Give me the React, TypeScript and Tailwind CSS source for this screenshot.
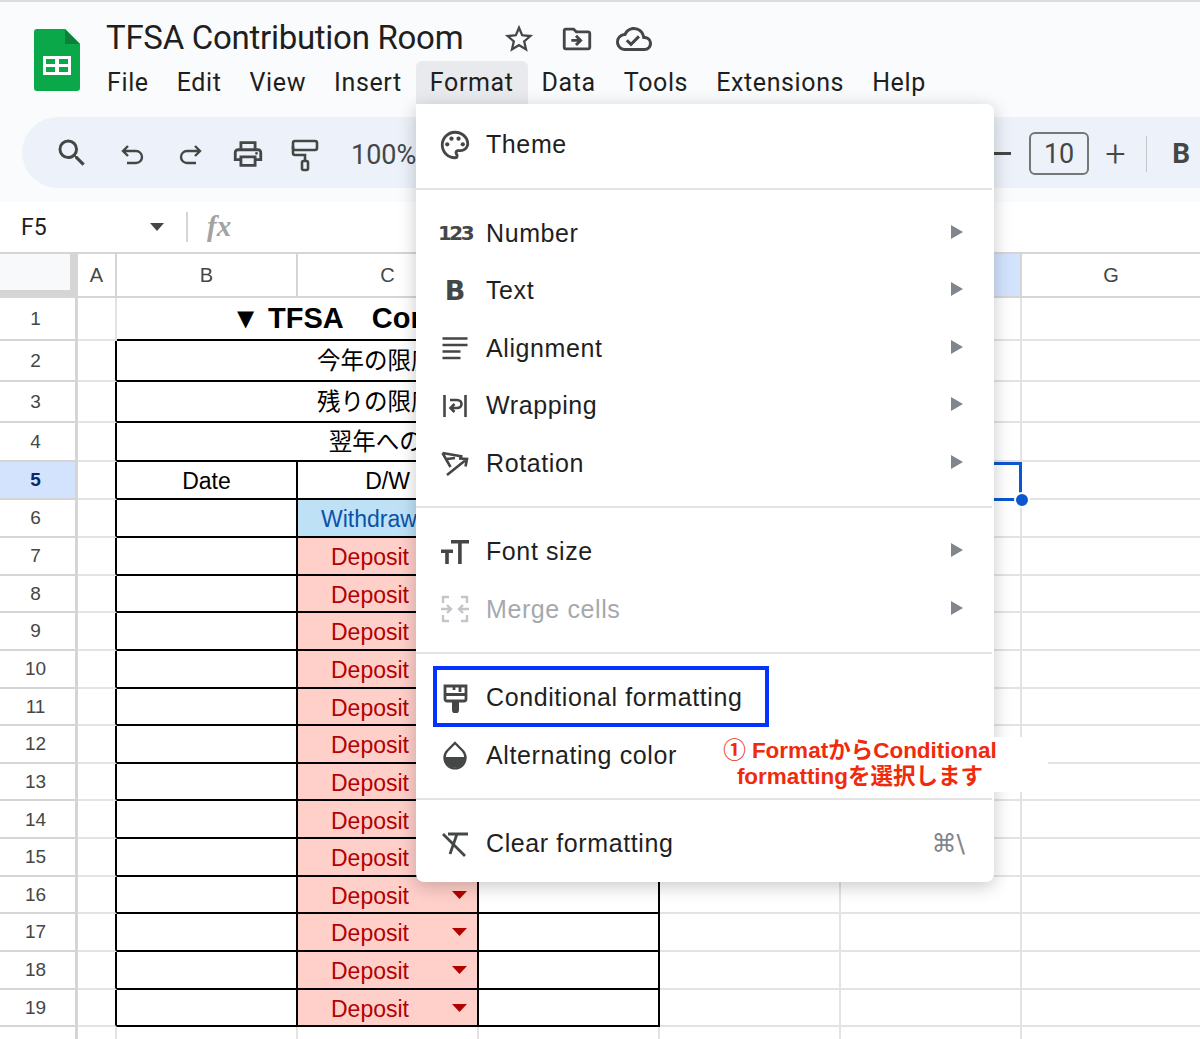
import React from "react";
import {
  MdSearch, MdOutlinePrint, MdStarBorder,
  MdOutlineDriveFileMove, MdOutlineCloudDone, MdOutlinePalette,
} from "react-icons/md";

const MENUBAR = ["File", "Edit", "View", "Insert", "Format", "Data", "Tools", "Extensions", "Help"];
const COLS = ["A", "B", "C", "D", "E", "F", "G"];
const ROWS = Array.from({ length: 20 }, (_, i) => i + 1);

const UndoIcon = () => (
  <svg width="26" height="26" viewBox="0 0 26 26" fill="none" stroke="#444746" strokeWidth="2.400">
    <path d="M8 4L3 9l5 5M3 9h13a6 6 0 0 1 0 12H7" />
  </svg>
);
const RedoIcon = () => (
  <svg width="26" height="26" viewBox="0 0 26 26" fill="none" stroke="#444746" strokeWidth="2.400">
    <path d="M18 4l5 5-5 5M23 9H10a6 6 0 0 0 0 12h9" />
  </svg>
);
const RollerIcon = () => (
  <svg width="34" height="34" viewBox="0 0 34 34" fill="none" stroke="#444746" strokeWidth="2.600">
    <rect x="5" y="3" width="24" height="9" rx="2" />
    <path d="M5 8v7a2 2 0 0 0 2 2h10v6" />
    <rect x="14" y="23" width="6" height="9" rx="1.500" />
  </svg>
);
const AlignIcon = () => (
  <svg width="30" height="30" viewBox="0 0 30 30" fill="none" stroke="#444746" strokeWidth="2.400">
    <path d="M2.500 5.500h25M2.500 12h25M2.500 18.500h18M2.500 25h18" />
  </svg>
);
const WrapIcon = () => (
  <svg width="30" height="30" viewBox="0 0 30 30" fill="none" stroke="#444746" strokeWidth="2.600">
    <path d="M4.500 4v22M25.500 4v22M10 9h7c3 0 4.500 2 4.500 4s-1.500 4-4.500 4h-6M14.500 13l-4 4 4 4" />
  </svg>
);
const RotateIcon = () => (
  <svg width="30" height="30" viewBox="0 0 30 30" fill="none" stroke="#444746" strokeWidth="2.600">
    <path d="M2.500 5l20 3.500M2.500 5l8 14M7 11l8-1M7 27L27 11M19 10.500l8 .5-1.500 7.500" />
  </svg>
);
const FontSizeIcon = () => (
  <svg width="30" height="30" viewBox="0 0 30 30" fill="#444746">
    <path d="M11 3h18v3.500h-7.300V27h-3.600V6.500H11zM1 12.500h12V16H8.800v11H5.200V16H1z" />
  </svg>
);
const MergeIcon = () => (
  <svg width="30" height="30" viewBox="0 0 30 30" fill="none" stroke="#c2c5c9" strokeWidth="2.400">
    <path d="M3 9V3h6M27 9V3h-6M3 21v6h6M27 21v6h-6M1 15h10M7 11l4 4-4 4M29 15H19M23 11l-4 4 4 4" />
  </svg>
);
const BrushIcon = () => (
  <svg width="30" height="30" viewBox="0 0 30 30" fill="none" stroke="#444746" strokeWidth="2.800">
    <path d="M5 3h21v13a2 2 0 0 1-2 2H7a2 2 0 0 1-2-2zM5 11.500h21M14 3v4M20 3v6" />
    <path d="M12 18h7v9a3.500 3.500 0 0 1-7 0z" fill="#444746" stroke="none" />
  </svg>
);
const DropIcon = () => (
  <svg width="30" height="30" viewBox="0 0 30 30" fill="none" stroke="#444746" strokeWidth="2.400">
    <path d="M15 3l7.500 7.500a10.500 10.500 0 1 1-15 0z" />
    <path d="M4.500 17h21a10.500 10.500 0 0 1-21 0z" fill="#444746" stroke="none" />
  </svg>
);
const ClearIcon = () => (
  <svg width="30" height="30" viewBox="0 0 30 30" fill="none" stroke="#444746" strokeWidth="2.800">
    <path d="M8 5h20M17 5l-7 20M3 5l22 22" />
  </svg>
);
const SheetsLogo = () => (
  <svg width="46" height="62" viewBox="0 0 46 62">
    <path d="M3 0h28l15 15v44a3 3 0 0 1-3 3H3a3 3 0 0 1-3-3V3a3 3 0 0 1 3-3z" fill="#0ba84a" />
    <path d="M31 0l15 15H31z" fill="#0a8038" />
    <path d="M9 27h28v19H9zM12 30v5h9v-5zM25 30v5h9v-5zM12 38v5h9v-5zM25 38v5h9v-5z" fill="#fff" fillRule="evenodd" />
  </svg>
);

const MENU_GROUPS = [
  [{ label: "Theme", icon: <MdOutlinePalette size={34} color="#444746" /> }],
  [
    { label: "Number", sub: true, icon: <span className="font-['DejaVu_Sans'] font-bold text-[20px] tracking-[-2.500px] text-[#444746]">123</span> },
    { label: "Text", sub: true, icon: <span className="font-['DejaVu_Sans'] font-bold text-[27px] text-[#444746]">B</span> },
    { label: "Alignment", sub: true, icon: <AlignIcon /> },
    { label: "Wrapping", sub: true, icon: <WrapIcon /> },
    { label: "Rotation", sub: true, icon: <RotateIcon /> },
  ],
  [
    { label: "Font size", sub: true, icon: <FontSizeIcon /> },
    { label: "Merge cells", sub: true, disabled: true, icon: <MergeIcon /> },
  ],
  [
    { label: "Conditional formatting", icon: <BrushIcon /> },
    { label: "Alternating color", icon: <DropIcon /> },
  ],
  [{ label: "Clear formatting", shortcut: true, icon: <ClearIcon /> }],
];

function FormatMenu() {
  return (
    <div className="absolute left-[416px] top-[104px] z-20 w-[578px] h-[778px] bg-white rounded-b-lg rounded-tr-lg shadow-[0_4px_18px_rgba(0,0,0,0.22)] py-3">
      {MENU_GROUPS.map((group, i) => (
        <div key={i} className={i > 0 ? "border-t-2 border-[#e3e3e3] mt-[14px] pt-[15px] mr-[2px]" : "mr-[2px]"}>
          {group.map((item) => (
            <div key={item.label} className="h-[57.500px] flex items-center">
              <div className="w-[70px] pl-[8px] flex justify-center items-center">{item.icon}</div>
              <span className={`text-[25px] tracking-[0.600px] ${item.disabled ? "text-[#a5a9ae]" : "text-[#1f1f1f]"}`}>{item.label}</span>
              {item.sub && (
                <svg className="ml-auto mr-[28px] mb-[3px]" width="14" height="16" viewBox="0 0 14 16">
                  <path d="M1 1l12 7-12 7z" fill="#80868b" />
                </svg>
              )}
              {item.shortcut && (
                <span className="ml-auto mr-[27px] text-[25px] text-[#80868b] font-['DejaVu_Sans']">⌘\</span>
              )}
            </div>
          ))}
        </div>
      ))}
    </div>
  );
}

function DepositCell() {
  return (
    <div className="bg-[#ffcfc9] border-r-2 border-b-2 border-black flex items-center text-[#b10202] text-[23px]">
      <span className="w-[144px] text-center pt-[3px]">Deposit</span>
      <svg className="ml-[10px]" width="15" height="8" viewBox="0 0 15 8">
        <path d="M0 0h15l-7.500 8z" fill="#b10202" />
      </svg>
    </div>
  );
}

function GridRow({ r }: { r: number }) {
  const plain = "border-r-2 border-b-2 border-[#e3e3e3]";
  const boxed = "border-r-2 border-b-2 border-black";
  const rowHeader = `flex items-center justify-center pr-[4px] pt-[1px] text-[19px] border-r-[3px] border-b-2 border-[#d5d5d5] ${
    r === 5 ? "bg-[#d3e3fd] text-[#0b2a66] font-bold" : "text-[#444746]"
  }`;
  const tail = (
    <>
      <div className={plain} />
      <div className={plain} />
      <div className="border-b-2 border-[#e3e3e3]" />
    </>
  );

  let body: React.ReactNode;
  if (r === 1) {
    body = (
      <div className="col-span-3 border-b-2 border-black flex items-center justify-center whitespace-nowrap font-bold text-[29px] text-black">
        ▼ TFSA　Contribution
      </div>
    );
  } else if (r >= 2 && r <= 4) {
    const labels: Record<number, string> = { 2: "今年の限度額", 3: "残りの限度額", 4: "翌年への枠" };
    body = (
      <div className="col-span-3 border-r-2 border-b-2 border-black flex items-center justify-center pt-[3px] text-[23.500px] text-black">
        {labels[r]}
      </div>
    );
  } else if (r === 5) {
    body = (
      <>
        <div className={`${boxed} flex items-center justify-center pt-[2px] text-[23px] text-black`}>Date</div>
        <div className={`${boxed} flex items-center justify-center pt-[2px] text-[23px] text-black`}>D/W</div>
        <div className={boxed} />
      </>
    );
  } else if (r === 6) {
    body = (
      <>
        <div className={boxed} />
        <div className="bg-[#bfe1f6] border-r-2 border-b-2 border-black flex items-center text-[#0a53a8] text-[23px] pl-[23px] pt-[3px]">Withdraw</div>
        <div className={boxed} />
      </>
    );
  } else if (r === 20) {
    body = (
      <>
        <div className={plain} />
        <div className={plain} />
        <div className={plain} />
      </>
    );
  } else {
    body = (
      <>
        <div className={boxed} />
        <DepositCell />
        <div className={boxed} />
      </>
    );
  }

  return (
    <>
      <div className={rowHeader}>{r}</div>
      <div className={r === 1 || r === 20 ? plain : "border-r-2 border-b-2 border-b-[#e3e3e3] border-r-black"} />
      {body}
      {tail}
    </>
  );
}

export default function App() {
  return (
    <div className="relative w-[1200px] h-[1039px] overflow-hidden bg-white font-['Liberation_Sans','Noto_Sans_CJK_JP',sans-serif]">
      {/* header */}
      <div className="h-[202px] bg-[#f9fbfd] border-t-2 border-[#dadce0] font-['Roboto',sans-serif] text-[#1f1f1f]">
        <div className="flex h-[115px]">
          <div className="pl-[34px] pt-[27px] w-[92px]">
            <SheetsLogo />
          </div>
          <div className="pl-[14px]">
            <div className="flex items-center h-[42px] mt-[14px]">
              <span className="text-[33px] tracking-[-0.280px] w-[396px] leading-none">TFSA Contribution Room</span>
              <MdStarBorder size={34} color="#444746" className="mt-[4px]" />
              <MdOutlineDriveFileMove size={34} color="#444746" className="ml-[24px] mt-[4px]" />
              <MdOutlineCloudDone size={36} color="#444746" className="ml-[22px] mt-[4px]" />
            </div>
            <div className="flex items-center h-[43px] mt-[3px] -ml-[13px]">
              {MENUBAR.map((m) => (
                <div key={m} className={`h-full flex items-center px-[14px] text-[25px] tracking-[0.620px] ${m === "Format" ? "bg-[#e8eaed] rounded-t-md" : ""}`}>
                  {m}
                </div>
              ))}
            </div>
          </div>
        </div>
        <div className="ml-[22px] h-[71px] bg-[#edf2fa] rounded-l-[36px] flex items-center text-[#444746]">
          <MdSearch size={36} className="ml-[32px]" />
          <div className="ml-[30px] mt-[5px]"><UndoIcon /></div>
          <div className="ml-[31px] mt-[5px]"><RedoIcon /></div>
          <MdOutlinePrint size={34} className="ml-[28px] mt-[2px]" />
          <div className="ml-[23px] mt-[5px]"><RollerIcon /></div>
          <span className="ml-[29px] mt-[6px] text-[27px]">100%</span>
          <div className="ml-auto flex items-center mt-[2px]">
            <div className="w-[18px] h-[3px] bg-[#444746] mr-[18px]" />
            <div className="w-[60px] h-[43px] border-2 border-[#747775] rounded-md flex items-center justify-center pt-[2px] text-[27px]">10</div>
            <span className="ml-[16px] text-[36px] leading-none font-light w-[22px]">+</span>
            <div className="ml-[19px] w-px h-[36px] bg-[#c7c7c7]" />
            <span className="ml-[25px] mr-[10px] text-[28px] font-bold">B</span>
          </div>
        </div>
      </div>

      {/* formula bar */}
      <div className="h-[52px] flex items-center border-b-2 border-[#d5d5d5] text-[#1f1f1f]">
        <span className="ml-[21px] pt-[2px] text-[23px] font-['Roboto',sans-serif] w-[129px]">F5</span>
        <svg width="14" height="8" viewBox="0 0 14 8"><path d="M0 0h14l-7 8z" fill="#444746" /></svg>
        <div className="ml-[22px] w-[2px] h-[30px] bg-[#d5d5d5]" />
        <span className="ml-[19px] font-['Liberation_Serif',serif] italic font-bold text-[29px] text-[#a3a3a3]">fx</span>
      </div>

      {/* sheet */}
      <div className="relative grid grid-cols-[78px_39px_181px_181px_181px_181px_181px_1fr] grid-rows-[44px_43px_41px_41px_39px_38px_38px_repeat(13,37.650px)_38px]">
        <div className="bg-[#d5d5d5] pr-2 pb-2"><div className="h-full bg-[#f8f9fa]" /></div>
        {COLS.map((c) => (
          <div
            key={c}
            className={`flex items-center justify-center text-[20px] text-[#444746] border-b-2 border-[#d5d5d5] ${c === "G" ? "" : "border-r-2"} ${c === "F" ? "bg-[#d3e3fd]" : ""}`}
          >
            {c}
          </div>
        ))}
        {ROWS.map((r) => (
          <GridRow key={r} r={r} />
        ))}
        {/* F5 selection */}
        <div className="absolute left-[841px] top-[208px] w-[181px] h-[39px] border-[3px] border-[#0b57d0]" />
        <div className="absolute left-[1014px] top-[238px] w-[16px] h-[16px] rounded-full bg-[#0b57d0] border-2 border-white" />
      </div>

      <FormatMenu />

      {/* annotation */}
      <div className="absolute z-30 left-[433px] top-[666px] w-[336px] h-[61px] border-[4px] border-[#0433ff]" />
      <div className="absolute z-30 left-[718px] top-[737px] w-[330px] h-[55px] bg-white text-[#f02b0c] font-bold text-[22.500px] leading-[26px] text-center pr-[46px] pt-[1px]">
        ① FormatからConditional<br />formattingを選択します
      </div>
    </div>
  );
}
